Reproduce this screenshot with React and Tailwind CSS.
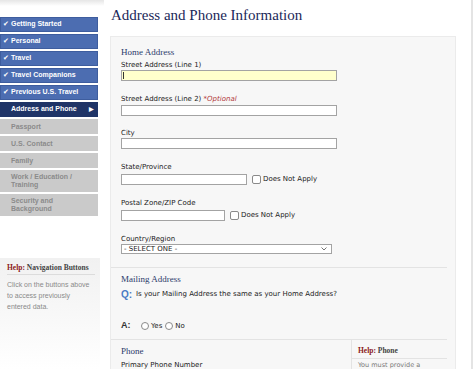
import React from 'react';

const navDone = ['Getting Started', 'Personal', 'Travel', 'Travel Companions', 'Previous U.S. Travel'];
const navTodo = [['Passport'], ['U.S. Contact'], ['Family'], ['Work / Education /', 'Training'], ['Security and', 'Background']];

const sans = { fontFamily: '"Liberation Sans", Arial, sans-serif' };
const verdana = { fontFamily: '"DejaVu Sans", Verdana, sans-serif' };
const serif = { fontFamily: '"Liberation Serif", "Times New Roman", serif' };

const Label = ({ children, className = '' }) => (
  <div className={`text-[7px] leading-[9px] text-[#222] ${className}`} style={verdana}>
    {children}
  </div>
);

const Input = ({ className = '', yellow }) => (
  <div
    className={`relative h-[11px] border border-[#a3a3a3] ${yellow ? 'bg-[#ffffcc]' : 'bg-white'} ${className}`}
  >
    {yellow && <div className="absolute left-[1px] top-[1px] h-[7px] w-px bg-[#333]" />}
  </div>
);

const Check = () => (
  <div className="flex items-center gap-[2px]">
    <div className="h-[9px] w-[9px] rounded-[2px] border border-[#8a8a8a] bg-white" />
    <span className="text-[7px] leading-[9px] text-[#222]" style={verdana}>
      Does Not Apply
    </span>
  </div>
);

const Radio = ({ label }) => (
  <div className="flex items-center gap-[2px]">
    <div className="h-[8px] w-[8px] rounded-full border border-[#8a8a8a] bg-white" />
    <span className="text-[7px] text-[#222]" style={verdana}>
      {label}
    </span>
  </div>
);

export default function App() {
  return (
    <div className="relative flex h-[369px] w-[474px] overflow-hidden bg-white">
      {/* sidebar */}
      <div className="flex w-[100px] shrink-0 flex-col">
        <div className="h-[6px] w-[104px] bg-gradient-to-b from-[#e6e6e6] to-white" />
        <div className="mt-[11px] flex w-[98px] flex-col gap-[2px]" style={sans}>
          {navDone.map((n) => (
            <div
              key={n}
              className="flex h-[15px] items-center border border-[#3e5d9e] bg-[#4c6db1] pl-[2px] text-[7px] font-bold text-white"
            >
              <span className="w-[8px] text-[7px] leading-[7px]" style={verdana}>✔</span>
              {n}
            </div>
          ))}
          <div className="flex h-[15px] items-center justify-between bg-[#1f3467] pl-[11px] pr-[4px] text-[7px] font-bold text-white">
            <span>Address and Phone</span>
            <span className="text-[6px]">▶</span>
          </div>
          {navTodo.map((n) => (
            <div
              key={n[0]}
              className={`flex flex-col justify-center bg-[#cacaca] pl-[11px] text-[7px] font-bold leading-[8px] text-[#8b8b8b] ${n.length > 1 ? 'h-[22px]' : 'h-[15px]'}`}
            >
              {n.map((l) => (
                <span key={l}>{l}</span>
              ))}
            </div>
          ))}
        </div>
        <div className="mt-[42px] flex h-[111px] flex-col bg-gradient-to-b from-[#f1f1f1] via-[#f8f8f8] to-white pl-[7px] pr-[5px]">
          <div className="pt-[5px] text-[7.5px] font-bold leading-[10px]" style={serif}>
            <span className="text-[#8b1a1a]">Help:</span> <span className="text-[#444]">Navigation Buttons</span>
          </div>
          <div className="mt-[1px] border-t border-[#dcdcdc]" />
          <div className="mt-[4px] text-[7px] leading-[11px] text-[#8a8a8a]" style={sans}>
            Click on the buttons above
            <br />
            to access previously
            <br />
            entered data.
          </div>
        </div>
      </div>

      {/* main */}
      <div className="ml-[10px] flex w-[346px] shrink-0 flex-col pt-[7px]">
        <h1 className="pl-[1px] text-[15px] leading-[17px] text-[#1b2859]" style={serif}>
          Address and Phone Information
        </h1>
        <div className="mt-[12px] flex-1 border border-b-0 border-[#ebebeb] bg-[#f7f7f7]">
          <div className="pl-[10px]">
            <div className="pt-[10px] text-[9px] leading-[11px] text-[#2b3a6a]" style={serif}>
              Home Address
            </div>
            <Label className="mt-[3px]">Street Address (Line 1)</Label>
            <Input yellow className="w-[216px]" />
            <Label className="mt-[14px]">
              Street Address (Line 2) <span className="italic text-[#b23a3a]">*Optional</span>
            </Label>
            <Input className="mt-[1px] w-[216px]" />
            <Label className="mt-[13px]">City</Label>
            <Input className="w-[216px]" />
            <Label className="mt-[14px]">State/Province</Label>
            <div className="mt-[2px] flex items-center gap-[5px]">
              <Input className="w-[126px]" />
              <Check />
            </div>
            <Label className="mt-[14px]">Postal Zone/ZIP Code</Label>
            <div className="mt-[2px] flex items-center gap-[5px]">
              <Input className="w-[104px]" />
              <Check />
            </div>
            <Label className="mt-[14px]">Country/Region</Label>
            <div className="flex h-[10px] w-[211px] items-center justify-between border border-[#a3a3a3] bg-white pl-[2px] pr-[4px]">
              <span className="text-[7px] leading-[8px] text-[#222]" style={verdana}>- SELECT ONE -</span>
              <svg width="6" height="4" viewBox="0 0 6 4" fill="none" stroke="#666" strokeWidth="0.9">
                <path d="M0.5 0.5 L3 3 L5.5 0.5" />
              </svg>
            </div>
          </div>
          <div className="mr-[8px] mt-[13px] border-t border-[#e3e3e3]" />
          <div className="pl-[10px]">
            <div className="mt-[6px] text-[9px] leading-[11px] text-[#2b3a6a]" style={serif}>
              Mailing Address
            </div>
            <div className="mt-[3px] flex h-[12px] items-center">
              <span className="w-[15px] text-[10px] font-bold text-[#4a7bc4]" style={sans}>Q:</span>
              <span className="text-[7px] text-[#222]" style={verdana}>
                Is your Mailing Address the same as your Home Address?
              </span>
            </div>
            <div className="mt-[20px] flex h-[12px] items-center">
              <span className="w-[20px] text-[9px] font-bold text-[#333]" style={sans}>A:</span>
              <div className="flex items-center gap-[3px]">
                <Radio label="Yes" />
                <Radio label="No" />
              </div>
            </div>
          </div>
          <div className="mr-[8px] mt-[7px] flex border-t border-[#e3e3e3]">
            <div className="w-[240px] pl-[10px]">
              <div className="mt-[6px] text-[9px] leading-[11px] text-[#2b3a6a]" style={serif}>
                Phone
              </div>
              <Label className="mt-[4px]">Primary Phone Number</Label>
            </div>
            <div className="flex-1 border-l border-[#e3e3e3]">
              <div className="ml-[6px] mt-[6px] text-[7.5px] font-bold leading-[10px]" style={serif}>
                <span className="text-[#8b1a1a]">Help:</span> <span className="text-[#444]">Phone</span>
              </div>
              <div className="mt-[2px] border-t border-[#e3e3e3]" />
              <div className="ml-[6px] mt-[2px] text-[6.5px] text-[#777]" style={verdana}>
                You must provide a
              </div>
            </div>
          </div>
        </div>
      </div>

      <div className="ml-[15px] h-full w-[2px] bg-[#e4e4e4]" />
    </div>
  );
}
